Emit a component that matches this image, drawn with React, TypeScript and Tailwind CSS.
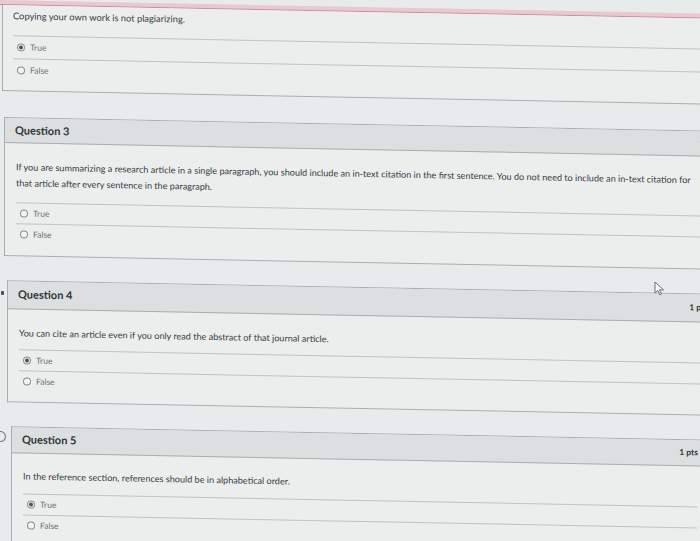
import React from 'react';

type OptionProps = { label: string; checked?: boolean; rowClass: string };

function Radio({ checked }: { checked?: boolean }) {
  return checked ? (
    <span className="flex h-[8px] w-[8px] items-center justify-center rounded-full border border-[#8d9397] bg-[#e9ecec]">
      <span className="h-[4px] w-[4px] rounded-full bg-[#4d5358]" />
    </span>
  ) : (
    <span className="h-[8px] w-[8px] rounded-full border border-[#868c90] bg-[#f3f5f5]" />
  );
}

function Option({ label, checked, rowClass }: OptionProps) {
  return (
    <div className={`flex items-center gap-[5px] border-t border-[#bfc3c3] pl-[4px] ${rowClass}`}>
      <Radio checked={checked} />
      <span className="text-[8.5px] leading-none text-[#6a7075]">{label}</span>
    </div>
  );
}

function Question({
  title,
  points,
  lines,
  answer,
  cardClass,
  headerClass,
  bodyClass,
  optionsClass,
  flag,
}: {
  title: string;
  points: string;
  lines: string[];
  answer: 'True' | 'False' | null;
  cardClass: string;
  headerClass: string;
  bodyClass: string;
  optionsClass: string;
  flag?: React.ReactNode;
}) {
  return (
    <div className={`relative border-t border-l border-[#a9aeae] bg-[#eceeee] ${cardClass}`}>
      {flag}
      <div className={`flex items-center justify-between border-b border-[#a9aeae] bg-[#dcdfdf] pl-[10px] pr-[10px] ${headerClass}`}>
        <span className="text-[11px] font-bold text-[#2f3538]">{title}</span>
        <span className="text-[8.5px] font-bold text-[#2f3538]">{points}</span>
      </div>
      <div className={`pl-[11px] ${bodyClass}`}>
        <p className="whitespace-nowrap text-[9.1px] leading-[16px] text-[#353c41]">
          {lines.map((l, i) => (
            <React.Fragment key={i}>
              {l}
              {i < lines.length - 1 && <br />}
            </React.Fragment>
          ))}
        </p>
        <div className={`mr-[11px] ${optionsClass}`}>
          <Option label="True" checked={answer === 'True'} rowClass="h-[21px]" />
          <Option label="False" checked={answer === 'False'} rowClass="h-[21px]" />
        </div>
      </div>
    </div>
  );
}

export default function App() {
  return (
    <div
      className="relative h-[541px] w-[700px] overflow-hidden bg-[#e8ebeb]"
      style={{ fontFamily: 'Lato, "Noto Sans", sans-serif' }}
    >
      <div className="origin-top-left skew-y-[1.1deg]">
        <div className="h-[5px] w-[760px] border-b border-[#c88f9d] bg-[#e9c8cf]" />

        {/* Question 2 (cut off at top) */}
        <div className="ml-[2px] w-[760px] border-b border-l border-[#a9aeae] bg-[#eceeee] pb-[9px] pl-[10px] pt-[3px]">
          <p className="text-[9.3px] leading-[16px] text-[#353c41]">Copying your own work is not plagiarizing.</p>
          <div className="mr-[10px] mt-[11px]">
            <Option label="True" checked rowClass="h-[23px]" />
            <Option label="False" rowClass="h-[23px]" />
          </div>
        </div>

        <Question
          title="Question 3"
          points="1 pts"
          lines={[
            'If you are summarizing a research article in a single paragraph, you should include an in-text citation in the first sentence. You do not need to include an in-text citation for',
            'that article after every sentence in the paragraph.',
          ]}
          answer={null}
          cardClass="ml-[4px] mt-[26px] w-[724px] border-b pb-[11px]"
          headerClass="h-[25px]"
          bodyClass="pt-[16px]"
          optionsClass="mt-[11px]"
        />

        <Question
          title="Question 4"
          points="1 pts"
          lines={['You can cite an article even if you only read the abstract of that journal article.']}
          answer="True"
          cardClass="ml-[7px] mt-[24px] w-[711px] border-b pb-[10px]"
          headerClass="h-[28px]"
          bodyClass="pt-[16px]"
          optionsClass="mt-[8px]"
          flag={<span className="absolute -left-[7px] top-[10px] h-[4px] w-[3px] rounded-[1px] bg-[#4a4f53]" />}
        />

        <Question
          title="Question 5"
          points="1 pts"
          lines={['In the reference section, references should be in alphabetical order.']}
          answer="True"
          cardClass="ml-[11px] mt-[24px] w-[697px] pb-[20px]"
          headerClass="h-[26px]"
          bodyClass="pt-[15px]"
          optionsClass="mt-[9px]"
          flag={<span className="absolute -left-[17px] top-[4px] h-[11px] w-[11px] rounded-full border border-[#6f7579]" />}
        />
      </div>

      {/* mouse pointer */}
      <svg className="absolute left-[654px] top-[281px]" width="11" height="15" viewBox="0 0 11 15">
        <path d="M1 1 L1 12 L3.8 9.4 L5.8 13.8 L7.4 13 L5.5 8.8 L9.5 8.8 Z" fill="#f7f8f8" stroke="#6b7074" strokeWidth="1" strokeLinejoin="round" />
      </svg>
    </div>
  );
}
